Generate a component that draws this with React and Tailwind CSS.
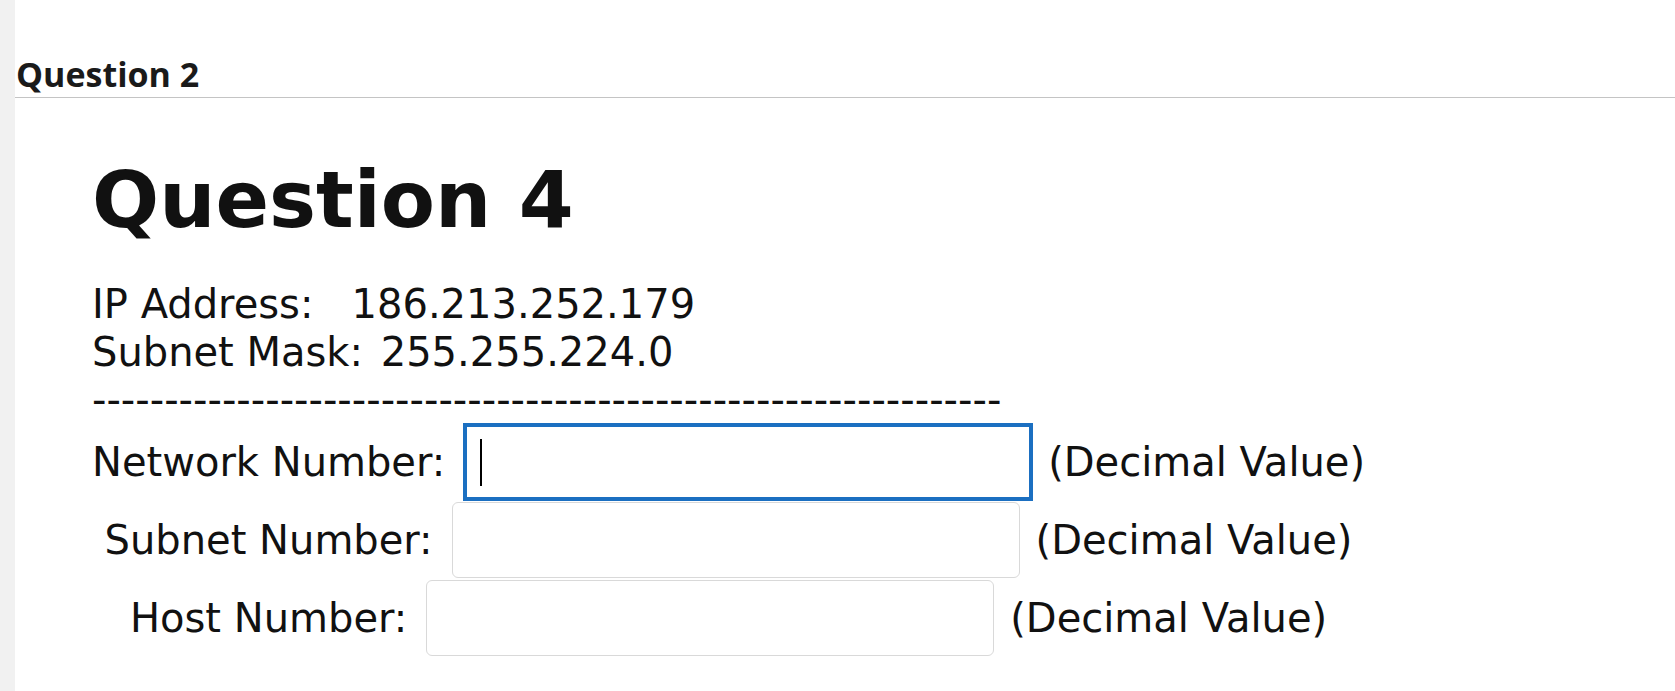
import React from 'react';

const BODY = { fontFamily: '"DejaVu Sans", Verdana, sans-serif' };

function Row({ label, focused }) {
  return (
    <div className="flex items-center">
      <span className="mr-[19px] whitespace-pre">{label}</span>
      {focused ? (
        <div className="relative -mx-[1px] -my-[1px]">
          <input
            type="text"
            className="block w-[570px] h-[78px] border-[4px] border-[#1b6fc1] bg-white outline-none caret-transparent"
          />
          <span className="absolute left-[17px] top-[16px] w-[2px] h-[47px] bg-black" />
        </div>
      ) : (
        <input
          type="text"
          className="block w-[568px] h-[76px] border border-[#d9d9d9] rounded-[6px] bg-white outline-none"
        />
      )}
      <span className="ml-[16px] whitespace-pre">(Decimal Value)</span>
    </div>
  );
}

export default function App() {
  return (
    <div className="flex min-h-screen bg-white text-[#111]">
      <div className="w-[15px] shrink-0 bg-[#f1f1f1]" />
      <div className="flex-1 min-w-0">
        {/* section header */}
        <div className="pt-[54px] pb-[3px] border-b border-[#c4c4c4]">
          <h2
            className="pl-[1px] text-[34px] leading-[40px] font-bold text-[#1a1a1a]"
            style={{ fontFamily: '"Open Sans", sans-serif' }}
          >
            Question 2
          </h2>
        </div>

        <div className="pl-[77px]" style={BODY}>
          <h1 className="mt-[56px] text-[79px] leading-[93px] font-bold">Question 4</h1>

          <div className="mt-[33px] text-[40px] leading-[48px]">
            <div className="whitespace-pre">IP Address:   186.213.252.179</div>
            <div className="whitespace-pre">
              Subnet Mask: <span className="ml-[5px]">255.255.224.0</span>
            </div>
            <div>---------------------------------------------------------------</div>
          </div>

          <div className="w-fit flex flex-col items-center gap-[2px] text-[40px] leading-[46px]">
            <Row label="Network Number:" focused />
            <Row label="Subnet Number:" />
            <Row label="Host Number:" />
          </div>
        </div>
      </div>
    </div>
  );
}
